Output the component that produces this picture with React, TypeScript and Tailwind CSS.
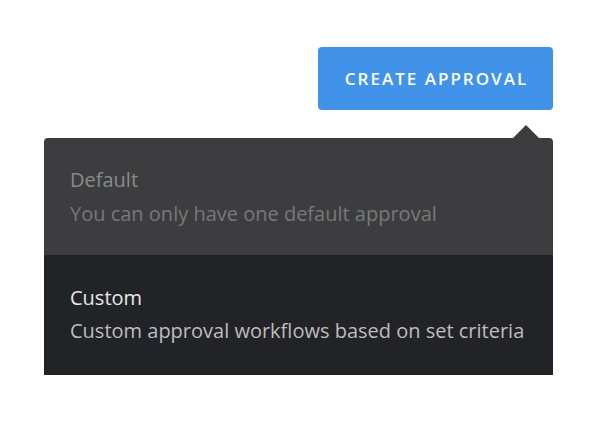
export default function App() {
  return (
    <div className="min-h-[422px] w-[594px] bg-white" style={{ fontFamily: '"Open Sans", "Noto Sans", sans-serif' }}>
      <div className="flex flex-col items-end pr-[41px] pt-[47px]">
        <button className="flex h-[63px] w-[235px] items-center justify-center rounded-[4px] bg-[#4193ea] pl-[2px] text-[17px] font-semibold tracking-[2px] text-white">
          CREATE APPROVAL
        </button>
        <div className="relative mt-[28px] w-[509px]">
          <div className="absolute right-[14px] top-[-13px] h-0 w-0 border-x-[13px] border-b-[13px] border-x-transparent border-b-[#3d3d3f]" />
          <div className="overflow-hidden rounded-t-[4px]">
            <div className="flex h-[117px] flex-col bg-[#3d3d3f] px-[26px] pt-[29px]">
              <div className="text-[20px] leading-[26px] text-[#8a8a8b]">Default</div>
              <div className="mt-[8px] text-[20px] leading-[26px] text-[#78787a]">You can only have one default approval</div>
            </div>
            <div className="flex h-[120px] flex-col bg-[#222327] px-[26px] pt-[30px]">
              <div className="text-[20px] leading-[26px] text-[#e8e8e8]">Custom</div>
              <div className="mt-[7px] text-[20px] leading-[26px] text-[#bdbdbe]">Custom approval workflows based on set criteria</div>
            </div>
          </div>
        </div>
      </div>
    </div>
  );
}
